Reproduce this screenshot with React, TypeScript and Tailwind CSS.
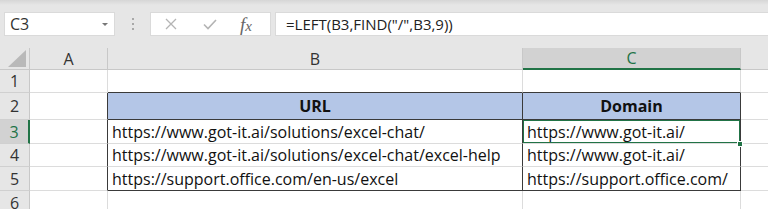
import React from 'react';

const font = { fontFamily: '"Open Sans", "Liberation Sans", sans-serif' };

const rows = [
  { n: 1, h: 'h-[23px]', b: '', c: '' },
  { n: 2, h: 'h-[27px]', b: 'URL', c: 'Domain' },
  { n: 3, h: 'h-[24px]', b: 'https://www.got-it.ai/solutions/excel-chat/', c: 'https://www.got-it.ai/' },
  { n: 4, h: 'h-[23px]', b: 'https://www.got-it.ai/solutions/excel-chat/excel-help', c: 'https://www.got-it.ai/' },
  { n: 5, h: 'h-[24px]', b: 'https://support.office.com/en-us/excel', c: 'https://support.office.com/' },
  { n: 6, h: 'h-[24px]', b: '', c: '' },
];

function FormulaBar() {
  return (
    <div className="h-[48px] bg-[#e6e6e6] relative flex items-start pt-[12px] pl-[4px]">
      <div className="absolute top-0 left-0 right-0 h-[5px] bg-gradient-to-b from-[#d6d6d6] to-[#e6e6e6]" />
      <div className="w-[111px] h-[24px] bg-white border border-[#dadada] flex items-center justify-between pl-[5px] pr-[6px] text-[16px] text-[#333]">
        <span>C3</span>
        <span className="w-0 h-0 border-l-[3px] border-r-[3px] border-t-[3px] border-l-transparent border-r-transparent border-t-[#777]" />
      </div>
      <div className="w-[35px] h-[24px] flex flex-col items-center justify-center gap-[3px]">
        <span className="w-[2px] h-[2px] bg-[#a8a8a8]" />
        <span className="w-[2px] h-[2px] bg-[#a8a8a8]" />
        <span className="w-[2px] h-[2px] bg-[#a8a8a8]" />
      </div>
      <div className="w-[121px] h-[24px] bg-white border border-[#dadada] flex items-center">
        <svg width="14" height="14" viewBox="0 0 14 14" className="ml-[13px]">
          <path d="M2 2 L12 12 M12 2 L2 12" stroke="#b4b4b4" strokeWidth="1.3" fill="none" />
        </svg>
        <svg width="16" height="14" viewBox="0 0 16 14" className="ml-[24px]">
          <path d="M2 7.5 L6 11.5 L14 3" stroke="#b4b4b4" strokeWidth="1.6" fill="none" />
        </svg>
        <span className="ml-[22px] text-[19px] leading-none italic text-[#666]" style={{ fontFamily: '"Liberation Serif", serif' }}>
          f<span className="text-[15px]">x</span>
        </span>
      </div>
      <div className="ml-[4px] flex-1 h-[24px] bg-white border-y border-l border-[#dadada] flex items-center pl-[10px] text-[15px] text-[#222]">
        =LEFT(B3,FIND("/",B3,9))
      </div>
    </div>
  );
}

export default function App() {
  return (
    <div className="w-[768px] h-[209px] overflow-hidden bg-white" style={font}>
      <FormulaBar />
      <div className="grid grid-cols-[30px_78px_415px_218px_1fr]">
        {/* header row */}
        <div className="h-[22px] bg-[#e6e6e6] border-r border-b border-[#c8c8c8] relative">
          <svg width="18" height="17" viewBox="0 0 18 17" className="absolute right-[3px] bottom-[2px]">
            <path d="M18 0 L18 17 L0 17 Z" fill="#b9b9b9" />
          </svg>
        </div>
        <div className="h-[22px] bg-[#e6e6e6] border-r border-b border-[#c8c8c8] flex items-center justify-center text-[16px] text-[#333]">A</div>
        <div className="h-[22px] bg-[#e6e6e6] border-r border-b border-[#c8c8c8] flex items-center justify-center text-[16px] text-[#333]">B</div>
        <div className="h-[22px] bg-[#d2d2d2] border-r border-[#c8c8c8] border-b-2 border-b-[#217346] flex items-center justify-center text-[16px] text-[#217346]">C</div>
        <div className="h-[22px] bg-[#e6e6e6] border-b border-[#c8c8c8]" />

        {rows.map((r) => {
          const sel = r.n === 3;
          const inTable = r.n >= 2 && r.n <= 5;
          const head = r.n === 2;
          const aboveTable = r.n === 1;
          const bottomTable = r.n === 5;
          const rowH = r.h;
          const bBorder = aboveTable || head || bottomTable ? 'border-b-[#3a3a3a]' : 'border-b-[#dcdcdc]';
          const rBorder = inTable ? 'border-r-[#3a3a3a]' : 'border-r-[#dcdcdc]';
          const fill = head ? 'bg-[#b4c6e7] font-bold justify-center' : 'pl-[4px]';
          return (
            <React.Fragment key={r.n}>
              <div
                className={`${rowH} flex items-center justify-center text-[16px] border-b border-b-[#d0d0d0] ${
                  sel ? 'bg-[#d2d2d2] text-[#217346] border-r-2 border-r-[#217346]' : 'bg-[#e6e6e6] text-[#333] border-r border-r-[#c8c8c8]'
                }`}
              >
                {r.n}
              </div>
              <div className={`${rowH} border-b border-b-[#dcdcdc] border-r ${rBorder}`} />
              <div className={`${rowH} border-b ${bBorder} border-r ${rBorder} flex items-center text-[16px] text-[#111] whitespace-nowrap overflow-hidden ${fill}`}>
                {r.b}
              </div>
              <div className={`${rowH} relative border-b ${bBorder} border-r ${rBorder} flex items-center text-[16px] text-[#111] whitespace-nowrap overflow-hidden ${fill}`}>
                {r.c}
                {sel && (
                  <div className="absolute -left-[1px] -top-[1px] -right-[1px] -bottom-[1px] border-2 border-[#217346] pointer-events-none" />
                )}
              </div>
              <div className={`${rowH} relative border-b border-b-[#dcdcdc]`}>
                {sel && <div className="absolute -left-[4px] -bottom-[4px] w-[6px] h-[6px] bg-[#217346] border border-white z-10" />}
              </div>
            </React.Fragment>
          );
        })}
      </div>
    </div>
  );
}
